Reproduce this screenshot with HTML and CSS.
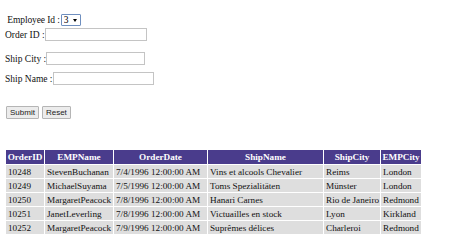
FILE: index.html
```html
<!DOCTYPE html>
<html lang="en">
<head>
    <meta charset="UTF-8">
    <title>Orders</title>
    <link rel="stylesheet" href="styles.css">
</head>
<body>
    <form class="filter">
        <div class="emp-row">
            <span class="lbl">&nbsp;Employee Id :</span>
            <span class="emp-wrap">
                <select class="emp-select">
                    <option>3</option>
                </select>
            </span>
        </div>
        <div class="field field-order">
            <span class="lbl">Order ID :</span>
            <input type="text" class="txt txt-order">
        </div>
        <div class="field field-city">
            <span class="lbl">Ship City :</span>
            <input type="text" class="txt txt-city">
        </div>
        <div class="field field-name">
            <span class="lbl">Ship Name :</span>
            <input type="text" class="txt txt-name">
        </div>
        <div class="actions">
            <button type="button" class="btn">Submit</button>
            <button type="button" class="btn">Reset</button>
        </div>
    </form>

    <table class="grid">
        <colgroup>
            <col class="c-id">
            <col class="c-emp">
            <col class="c-date">
            <col class="c-ship">
            <col class="c-city">
            <col class="c-ecity">
        </colgroup>
        <tr>
            <th>OrderID</th>
            <th>EMPName</th>
            <th>OrderDate</th>
            <th>ShipName</th>
            <th>ShipCity</th>
            <th>EMPCity</th>
        </tr>
        <tr>
            <td>10248</td>
            <td>StevenBuchanan</td>
            <td>7/4/1996 12:00:00 AM</td>
            <td>Vins et alcools Chevalier</td>
            <td>Reims</td>
            <td>London</td>
        </tr>
        <tr>
            <td>10249</td>
            <td>MichaelSuyama</td>
            <td>7/5/1996 12:00:00 AM</td>
            <td>Toms Spezialitäten</td>
            <td>Münster</td>
            <td>London</td>
        </tr>
        <tr>
            <td>10250</td>
            <td>MargaretPeacock</td>
            <td>7/8/1996 12:00:00 AM</td>
            <td>Hanari Carnes</td>
            <td>Rio de Janeiro</td>
            <td>Redmond</td>
        </tr>
        <tr>
            <td>10251</td>
            <td>JanetLeverling</td>
            <td>7/8/1996 12:00:00 AM</td>
            <td>Victuailles en stock</td>
            <td>Lyon</td>
            <td>Kirkland</td>
        </tr>
        <tr>
            <td>10252</td>
            <td>MargaretPeacock</td>
            <td>7/9/1996 12:00:00 AM</td>
            <td>Suprêmes délices</td>
            <td>Charleroi</td>
            <td>Redmond</td>
        </tr>
    </table>
</body>
</html>
```

FILE: styles.css
```css
body {
    margin: 0;
    padding: 14px 5px 0 5px;
    font-family: "Liberation Serif", "Times New Roman", serif;
    font-size: 9.5px;
    color: #111;
    background: #fff;
}
.filter {
    margin: 0;
}
.emp-row {
    display: flex;
    align-items: center;
    height: 12px;
}
.emp-row .lbl {
    letter-spacing: -0.1px;
}
.emp-wrap {
    position: relative;
    display: inline-block;
    margin-left: 1px;
}
.emp-wrap::after {
    content: "";
    position: absolute;
    right: 4px;
    top: 5px;
    border-left: 2px solid transparent;
    border-right: 2px solid transparent;
    border-top: 3px solid #000;
}
.emp-select {
    display: block;
    -webkit-appearance: none;
    appearance: none;
    height: 12px;
    width: 20px;
    padding: 0 0 0 2px;
    margin: 0;
    font-family: "Liberation Serif", "Times New Roman", serif;
    font-size: 9.5px;
    line-height: 10px;
    border: 1px solid #6f8fbf;
    border-radius: 1px;
    background: #fff;
    color: #000;
}
.field {
    display: flex;
    align-items: center;
    height: 13px;
}
.field-order {
    margin-top: 2px;
}
.field-city {
    margin-top: 11px;
}
.field-name {
    margin-top: 7px;
}
.txt {
    height: 13px;
    box-sizing: border-box;
    padding: 0;
    border: 1px solid #c4c4c4;
}
.txt-order {
    width: 102px;
}
.txt-city {
    width: 99px;
}
.txt-name {
    width: 101px;
}
.actions {
    margin-top: 21px;
    display: flex;
    gap: 3px;
    margin-left: 1px;
}
.btn {
    height: 13px;
    padding: 0 3px;
    font-family: "Liberation Sans", Arial, sans-serif;
    font-size: 8px;
    background: #ececec;
    border: 1px solid #b5b5b5;
    border-radius: 1px;
    color: #222;
    line-height: 11px;
}
.grid {
    margin-top: 30px;
    border-collapse: separate;
    border-spacing: 1px;
    background: #fff;
    font-size: 9.2px;
}
.c-id { width: 38px; }
.c-emp { width: 68px; }
.c-date { width: 93px; }
.c-ship { width: 115px; }
.c-city { width: 56px; }
.c-ecity { width: 40px; }
.grid th {
    background: #4a3c8c;
    color: #fff;
    font-weight: bold;
    height: 14px;
    padding: 0 1px;
    text-align: center;
    white-space: nowrap;
}
.grid td {
    background: #dedede;
    height: 13px;
    padding: 0 1px 0 2px;
    white-space: nowrap;
}
```
